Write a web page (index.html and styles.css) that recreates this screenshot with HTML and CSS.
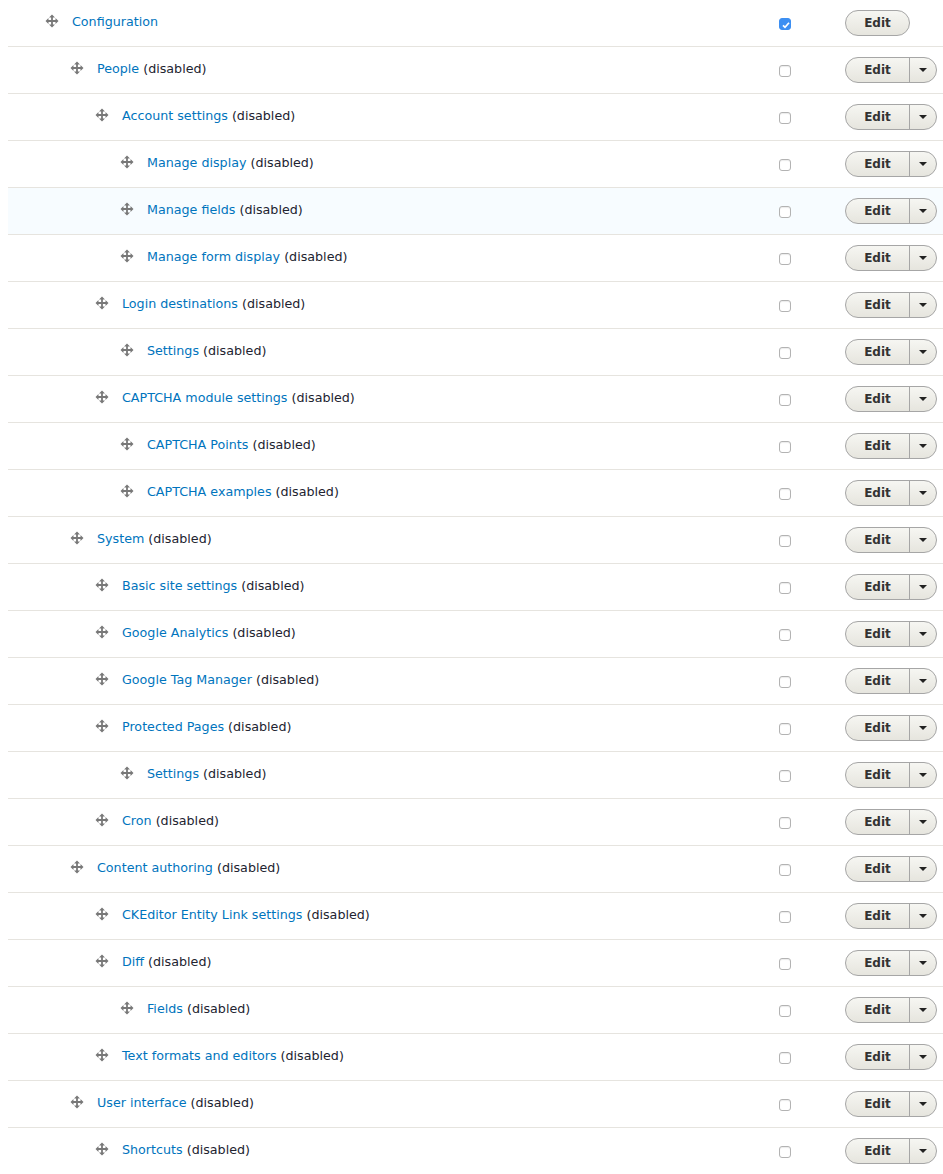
FILE: index.html
```html
<!DOCTYPE html>
<html lang="en">
<head>
    <meta charset="UTF-8">
    <title>Menu links</title>
    <link rel="stylesheet" href="styles.css">
</head>
<body>
    <svg class="sprite" xmlns="http://www.w3.org/2000/svg">
        <symbol id="move" viewBox="0 0 14 14">
            <path d="M7 0.5 L10 3.5 H7.9 V6.1 H10.5 V4 L13.5 7 L10.5 10 V7.9 H7.9 V10.5 H10 L7 13.5 L4 10.5 H6.1 V7.9 H3.5 V10 L0.5 7 L3.5 4 V6.1 H6.1 V3.5 H4 Z" fill="#787878"/>
        </symbol>
    </svg>

    <div class="container">
        <table class="menu-overview">
            <colgroup>
                <col class="col-title">
                <col class="col-enabled">
                <col class="col-ops">
            </colgroup>
            <tbody>
                <tr>
                    <td class="title"><div class="indentation"></div><a class="handle"><svg><use href="#move"/></svg></a><a href="#">Configuration</a></td>
                    <td class="enabled"><input type="checkbox" checked></td>
                    <td class="ops"><div class="dropbutton single"><a class="dropbutton-action" href="#">Edit</a></div></td>
                </tr>
                <tr>
                    <td class="title"><div class="indentation"></div><div class="indentation"></div><a class="handle"><svg><use href="#move"/></svg></a><a href="#">People</a> (disabled)</td>
                    <td class="enabled"><input type="checkbox"></td>
                    <td class="ops"><div class="dropbutton"><a class="dropbutton-action" href="#">Edit</a><button class="dropbutton-toggle"><span class="arrow"></span></button></div></td>
                </tr>
                <tr>
                    <td class="title"><div class="indentation"></div><div class="indentation"></div><div class="indentation"></div><a class="handle"><svg><use href="#move"/></svg></a><a href="#">Account settings</a> (disabled)</td>
                    <td class="enabled"><input type="checkbox"></td>
                    <td class="ops"><div class="dropbutton"><a class="dropbutton-action" href="#">Edit</a><button class="dropbutton-toggle"><span class="arrow"></span></button></div></td>
                </tr>
                <tr>
                    <td class="title"><div class="indentation"></div><div class="indentation"></div><div class="indentation"></div><div class="indentation"></div><a class="handle"><svg><use href="#move"/></svg></a><a href="#">Manage display</a> (disabled)</td>
                    <td class="enabled"><input type="checkbox"></td>
                    <td class="ops"><div class="dropbutton"><a class="dropbutton-action" href="#">Edit</a><button class="dropbutton-toggle"><span class="arrow"></span></button></div></td>
                </tr>
                <tr class="hover">
                    <td class="title"><div class="indentation"></div><div class="indentation"></div><div class="indentation"></div><div class="indentation"></div><a class="handle"><svg><use href="#move"/></svg></a><a href="#">Manage fields</a> (disabled)</td>
                    <td class="enabled"><input type="checkbox"></td>
                    <td class="ops"><div class="dropbutton"><a class="dropbutton-action" href="#">Edit</a><button class="dropbutton-toggle"><span class="arrow"></span></button></div></td>
                </tr>
                <tr>
                    <td class="title"><div class="indentation"></div><div class="indentation"></div><div class="indentation"></div><div class="indentation"></div><a class="handle"><svg><use href="#move"/></svg></a><a href="#">Manage form display</a> (disabled)</td>
                    <td class="enabled"><input type="checkbox"></td>
                    <td class="ops"><div class="dropbutton"><a class="dropbutton-action" href="#">Edit</a><button class="dropbutton-toggle"><span class="arrow"></span></button></div></td>
                </tr>
                <tr>
                    <td class="title"><div class="indentation"></div><div class="indentation"></div><div class="indentation"></div><a class="handle"><svg><use href="#move"/></svg></a><a href="#">Login destinations</a> (disabled)</td>
                    <td class="enabled"><input type="checkbox"></td>
                    <td class="ops"><div class="dropbutton"><a class="dropbutton-action" href="#">Edit</a><button class="dropbutton-toggle"><span class="arrow"></span></button></div></td>
                </tr>
                <tr>
                    <td class="title"><div class="indentation"></div><div class="indentation"></div><div class="indentation"></div><div class="indentation"></div><a class="handle"><svg><use href="#move"/></svg></a><a href="#">Settings</a> (disabled)</td>
                    <td class="enabled"><input type="checkbox"></td>
                    <td class="ops"><div class="dropbutton"><a class="dropbutton-action" href="#">Edit</a><button class="dropbutton-toggle"><span class="arrow"></span></button></div></td>
                </tr>
                <tr>
                    <td class="title"><div class="indentation"></div><div class="indentation"></div><div class="indentation"></div><a class="handle"><svg><use href="#move"/></svg></a><a href="#">CAPTCHA module settings</a> (disabled)</td>
                    <td class="enabled"><input type="checkbox"></td>
                    <td class="ops"><div class="dropbutton"><a class="dropbutton-action" href="#">Edit</a><button class="dropbutton-toggle"><span class="arrow"></span></button></div></td>
                </tr>
                <tr>
                    <td class="title"><div class="indentation"></div><div class="indentation"></div><div class="indentation"></div><div class="indentation"></div><a class="handle"><svg><use href="#move"/></svg></a><a href="#">CAPTCHA Points</a> (disabled)</td>
                    <td class="enabled"><input type="checkbox"></td>
                    <td class="ops"><div class="dropbutton"><a class="dropbutton-action" href="#">Edit</a><button class="dropbutton-toggle"><span class="arrow"></span></button></div></td>
                </tr>
                <tr>
                    <td class="title"><div class="indentation"></div><div class="indentation"></div><div class="indentation"></div><div class="indentation"></div><a class="handle"><svg><use href="#move"/></svg></a><a href="#">CAPTCHA examples</a> (disabled)</td>
                    <td class="enabled"><input type="checkbox"></td>
                    <td class="ops"><div class="dropbutton"><a class="dropbutton-action" href="#">Edit</a><button class="dropbutton-toggle"><span class="arrow"></span></button></div></td>
                </tr>
                <tr>
                    <td class="title"><div class="indentation"></div><div class="indentation"></div><a class="handle"><svg><use href="#move"/></svg></a><a href="#">System</a> (disabled)</td>
                    <td class="enabled"><input type="checkbox"></td>
                    <td class="ops"><div class="dropbutton"><a class="dropbutton-action" href="#">Edit</a><button class="dropbutton-toggle"><span class="arrow"></span></button></div></td>
                </tr>
                <tr>
                    <td class="title"><div class="indentation"></div><div class="indentation"></div><div class="indentation"></div><a class="handle"><svg><use href="#move"/></svg></a><a href="#">Basic site settings</a> (disabled)</td>
                    <td class="enabled"><input type="checkbox"></td>
                    <td class="ops"><div class="dropbutton"><a class="dropbutton-action" href="#">Edit</a><button class="dropbutton-toggle"><span class="arrow"></span></button></div></td>
                </tr>
                <tr>
                    <td class="title"><div class="indentation"></div><div class="indentation"></div><div class="indentation"></div><a class="handle"><svg><use href="#move"/></svg></a><a href="#">Google Analytics</a> (disabled)</td>
                    <td class="enabled"><input type="checkbox"></td>
                    <td class="ops"><div class="dropbutton"><a class="dropbutton-action" href="#">Edit</a><button class="dropbutton-toggle"><span class="arrow"></span></button></div></td>
                </tr>
                <tr>
                    <td class="title"><div class="indentation"></div><div class="indentation"></div><div class="indentation"></div><a class="handle"><svg><use href="#move"/></svg></a><a href="#">Google Tag Manager</a> (disabled)</td>
                    <td class="enabled"><input type="checkbox"></td>
                    <td class="ops"><div class="dropbutton"><a class="dropbutton-action" href="#">Edit</a><button class="dropbutton-toggle"><span class="arrow"></span></button></div></td>
                </tr>
                <tr>
                    <td class="title"><div class="indentation"></div><div class="indentation"></div><div class="indentation"></div><a class="handle"><svg><use href="#move"/></svg></a><a href="#">Protected Pages</a> (disabled)</td>
                    <td class="enabled"><input type="checkbox"></td>
                    <td class="ops"><div class="dropbutton"><a class="dropbutton-action" href="#">Edit</a><button class="dropbutton-toggle"><span class="arrow"></span></button></div></td>
                </tr>
                <tr>
                    <td class="title"><div class="indentation"></div><div class="indentation"></div><div class="indentation"></div><div class="indentation"></div><a class="handle"><svg><use href="#move"/></svg></a><a href="#">Settings</a> (disabled)</td>
                    <td class="enabled"><input type="checkbox"></td>
                    <td class="ops"><div class="dropbutton"><a class="dropbutton-action" href="#">Edit</a><button class="dropbutton-toggle"><span class="arrow"></span></button></div></td>
                </tr>
                <tr>
                    <td class="title"><div class="indentation"></div><div class="indentation"></div><div class="indentation"></div><a class="handle"><svg><use href="#move"/></svg></a><a href="#">Cron</a> (disabled)</td>
                    <td class="enabled"><input type="checkbox"></td>
                    <td class="ops"><div class="dropbutton"><a class="dropbutton-action" href="#">Edit</a><button class="dropbutton-toggle"><span class="arrow"></span></button></div></td>
                </tr>
                <tr>
                    <td class="title"><div class="indentation"></div><div class="indentation"></div><a class="handle"><svg><use href="#move"/></svg></a><a href="#">Content authoring</a> (disabled)</td>
                    <td class="enabled"><input type="checkbox"></td>
                    <td class="ops"><div class="dropbutton"><a class="dropbutton-action" href="#">Edit</a><button class="dropbutton-toggle"><span class="arrow"></span></button></div></td>
                </tr>
                <tr>
                    <td class="title"><div class="indentation"></div><div class="indentation"></div><div class="indentation"></div><a class="handle"><svg><use href="#move"/></svg></a><a href="#">CKEditor Entity Link settings</a> (disabled)</td>
                    <td class="enabled"><input type="checkbox"></td>
                    <td class="ops"><div class="dropbutton"><a class="dropbutton-action" href="#">Edit</a><button class="dropbutton-toggle"><span class="arrow"></span></button></div></td>
                </tr>
                <tr>
                    <td class="title"><div class="indentation"></div><div class="indentation"></div><div class="indentation"></div><a class="handle"><svg><use href="#move"/></svg></a><a href="#">Diff</a> (disabled)</td>
                    <td class="enabled"><input type="checkbox"></td>
                    <td class="ops"><div class="dropbutton"><a class="dropbutton-action" href="#">Edit</a><button class="dropbutton-toggle"><span class="arrow"></span></button></div></td>
                </tr>
                <tr>
                    <td class="title"><div class="indentation"></div><div class="indentation"></div><div class="indentation"></div><div class="indentation"></div><a class="handle"><svg><use href="#move"/></svg></a><a href="#">Fields</a> (disabled)</td>
                    <td class="enabled"><input type="checkbox"></td>
                    <td class="ops"><div class="dropbutton"><a class="dropbutton-action" href="#">Edit</a><button class="dropbutton-toggle"><span class="arrow"></span></button></div></td>
                </tr>
                <tr>
                    <td class="title"><div class="indentation"></div><div class="indentation"></div><div class="indentation"></div><a class="handle"><svg><use href="#move"/></svg></a><a href="#">Text formats and editors</a> (disabled)</td>
                    <td class="enabled"><input type="checkbox"></td>
                    <td class="ops"><div class="dropbutton"><a class="dropbutton-action" href="#">Edit</a><button class="dropbutton-toggle"><span class="arrow"></span></button></div></td>
                </tr>
                <tr>
                    <td class="title"><div class="indentation"></div><div class="indentation"></div><a class="handle"><svg><use href="#move"/></svg></a><a href="#">User interface</a> (disabled)</td>
                    <td class="enabled"><input type="checkbox"></td>
                    <td class="ops"><div class="dropbutton"><a class="dropbutton-action" href="#">Edit</a><button class="dropbutton-toggle"><span class="arrow"></span></button></div></td>
                </tr>
                <tr>
                    <td class="title"><div class="indentation"></div><div class="indentation"></div><div class="indentation"></div><a class="handle"><svg><use href="#move"/></svg></a><a href="#">Shortcuts</a> (disabled)</td>
                    <td class="enabled"><input type="checkbox"></td>
                    <td class="ops"><div class="dropbutton"><a class="dropbutton-action" href="#">Edit</a><button class="dropbutton-toggle"><span class="arrow"></span></button></div></td>
                </tr>
            </tbody>
        </table>
    </div>
</body>
</html>
```

FILE: styles.css
```css
body {
    margin: 0;
    background: #fff;
    color: #222330;
    font-family: "DejaVu Sans", "Noto Sans", sans-serif;
    font-size: 12.7px;
}

.sprite {
    display: none;
}

.container {
    margin-left: 8px;
    width: 935px;
}

.menu-overview {
    width: 100%;
    border-collapse: collapse;
    table-layout: fixed;
}

.col-enabled { width: 100px; }
.col-ops { width: 108px; }

.menu-overview td {
    height: 43px;
    padding: 0 0 3px;
    border-bottom: 1px solid #e6e4df;
    vertical-align: middle;
}

.menu-overview tr.hover td {
    background-color: #f7fcff;
}

.menu-overview td.title {
    padding-left: 12px;
    white-space: nowrap;
}

.indentation {
    display: inline-block;
    width: 25px;
    height: 1px;
}

.handle {
    display: inline-block;
    width: 27px;
    vertical-align: -2px;
}

.handle svg {
    display: block;
    width: 14px;
    height: 14px;
}

a {
    color: #0074bd;
    text-decoration: none;
}

td.enabled {
    text-align: center;
}

td.enabled input {
    appearance: none;
    -webkit-appearance: none;
    display: block;
    width: 12px;
    height: 12px;
    margin: 4px auto 0;
    border: 1px solid #b3b3b3;
    border-radius: 3px;
    background: #fff;
    box-shadow: inset 0 1px 1px rgba(0, 0, 0, 0.08);
}

td.enabled input:checked {
    border-color: #3d8ff2;
    background-color: #3d8ff2;
    background-image: url("data:image/svg+xml,%3Csvg xmlns='http://www.w3.org/2000/svg' viewBox='0 0 12 12'%3E%3Cpath d='M3 6.3l2 2 4-4.6' fill='none' stroke='%23fff' stroke-width='1.7'/%3E%3C/svg%3E");
    background-size: 12px 12px;
    box-shadow: none;
}

.menu-overview td.ops {
    padding: 1px 0 2px 10px;
}

.dropbutton {
    display: flex;
    width: 90px;
    height: 24px;
    border: 1px solid #a6a6a6;
    border-radius: 13px;
    background: linear-gradient(to bottom, #f6f6f2, #e6e5de);
    box-sizing: content-box;
    overflow: hidden;
}

.dropbutton.single {
    width: 63px;
}

.dropbutton-action {
    width: 63px;
    line-height: 24px;
    text-align: center;
    color: #333;
    font-weight: bold;
    font-size: 12px;
}

.dropbutton-toggle {
    flex: 1;
    border: 0;
    border-left: 1px solid #a6a6a6;
    background: transparent;
    padding: 0;
    display: flex;
    align-items: center;
    justify-content: center;
}

.arrow {
    width: 0;
    height: 0;
    border-left: 4px solid transparent;
    border-right: 4px solid transparent;
    border-top: 4px solid #222;
}
```
